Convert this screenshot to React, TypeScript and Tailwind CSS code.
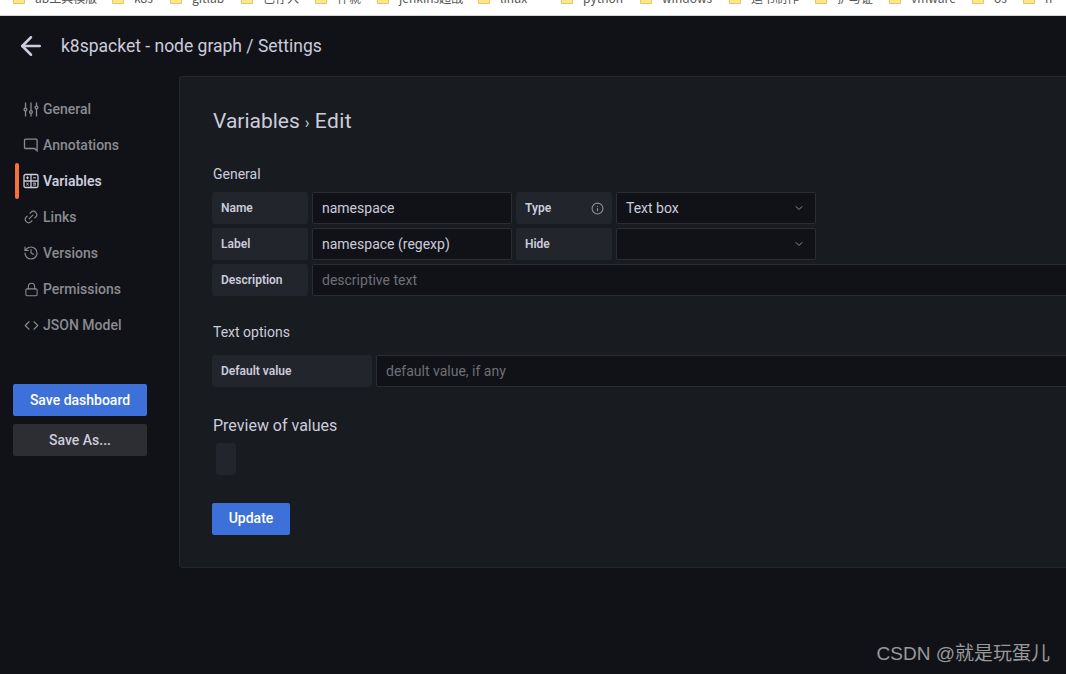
import { ArrowLeft, ChevronDown, Code, History, Info, Link2, Lock } from "lucide-react";
import type { ReactNode } from "react";

const bookmarks = [
  { name: "ab工具模版", w: "w-[99px]" },
  { name: "k8s", w: "w-[58px]" },
  { name: "gitlab", w: "w-[71px]" },
  { name: "已存入", w: "w-[74px]" },
  { name: "伴就", w: "w-[62px]" },
  { name: "jenkins超战", w: "w-[101px]" },
  { name: "linux", w: "w-[83px]" },
  { name: "python", w: "w-[79px]" },
  { name: "windows", w: "w-[89px]" },
  { name: "运书制作", w: "w-[86px]" },
  { name: "护与证", w: "w-[74px]" },
  { name: "vmware", w: "w-[83px]" },
  { name: "os", w: "w-[51px]" },
  { name: "h", w: "w-[43px]" },
];

function Folder() {
  return (
    <svg width="12" height="4" viewBox="0 0 12 4" className="shrink-0">
      <path d="M0.5 0V3.5H11.5V0" fill="#fde68f" stroke="#e8c95a" />
    </svg>
  );
}

function SlidersIcon() {
  return (
    <svg width="16" height="16" viewBox="0 0 16 16" fill="none" stroke="currentColor" strokeWidth="1.3">
      <path d="M2.5 1.5v14M8 1.5v14M13.5 1.5v14" />
      <circle cx="2.5" cy="8.5" r="1.4" fill="#111217" />
      <circle cx="8" cy="11" r="1.4" fill="#111217" />
      <circle cx="13.5" cy="6.5" r="1.4" fill="#111217" />
    </svg>
  );
}

function CommentIcon() {
  return (
    <svg width="16" height="16" viewBox="0 0 16 16" fill="none" stroke="currentColor" strokeWidth="1.3">
      <path d="M2.5 2.2h10.6a1 1 0 0 1 1 1v10.6l-2.6-2.3H2.5a1 1 0 0 1-1-1V3.2a1 1 0 0 1 1-1z" />
    </svg>
  );
}

function VariablesIcon() {
  return (
    <svg width="16" height="16" viewBox="0 0 16 16" fill="none" stroke="currentColor" strokeWidth="1.3">
      <rect x="1" y="1.5" width="14" height="13" rx="1.5" />
      <path d="M8 1.5v13M1 8h14" />
      <path d="M3 4.8h3M4.5 3.3v3M10 4.8h3M3.4 10l2.2 2.2M5.6 10l-2.2 2.2M10 10.2h3M10 12h3" strokeWidth="1" />
    </svg>
  );
}

const nav: { label: string; icon: ReactNode; active?: boolean }[] = [
  { label: "General", icon: <SlidersIcon /> },
  { label: "Annotations", icon: <CommentIcon /> },
  { label: "Variables", icon: <VariablesIcon />, active: true },
  { label: "Links", icon: <Link2 size={16} strokeWidth={1.7} className="-rotate-45" /> },
  { label: "Versions", icon: <History size={16} strokeWidth={1.7} /> },
  { label: "Permissions", icon: <Lock size={15} strokeWidth={1.7} /> },
  { label: "JSON Model", icon: <Code size={15} strokeWidth={1.7} /> },
];

function FieldLabel({ children, className = "w-[96px]" }: { children: ReactNode; className?: string }) {
  return (
    <div className={`flex h-8 shrink-0 items-center justify-between rounded-[3px] bg-[#22252b] pl-[9px] pr-2 text-xs font-semibold text-[#ccccdc] ${className}`}>
      {children}
    </div>
  );
}

function TextField({ value, placeholder, className = "w-[200px]" }: { value?: string; placeholder?: string; className?: string }) {
  return (
    <div className={`flex h-8 shrink-0 items-center rounded-[2px] border border-[#2b2d33] bg-[#111217] px-[9px] text-sm ${value ? "text-[#ccccdc]" : "text-[#6e6f76]"} ${className}`}>
      {value ?? placeholder}
    </div>
  );
}

function SelectField({ value }: { value?: string }) {
  return (
    <div className="flex h-8 w-[200px] shrink-0 items-center justify-between rounded-[2px] border border-[#2b2d33] bg-[#111217] pl-[9px] pr-[10px] text-sm text-[#ccccdc]">
      <span>{value}</span>
      <ChevronDown size={12} className="text-[#8e8e93]" />
    </div>
  );
}

export default function App() {
  return (
    <div className="relative flex h-[674px] w-[1066px] flex-col overflow-hidden bg-[#111217] font-['Roboto',sans-serif]">
      {/* browser bookmarks bar, cut off by the top of the shot */}
      <div className="flex h-[16px] shrink-0 items-start overflow-hidden border-b border-[#d4d4d6] bg-white pl-[13px]">
        {bookmarks.map((b) => (
          <div key={b.name} className={`flex h-[15px] shrink-0 items-end gap-[10px] overflow-hidden ${b.w}`}>
            <div className="self-start">
              <Folder />
            </div>
            <span className="mb-[11px] whitespace-nowrap font-['Noto_Sans_CJK_SC',sans-serif] text-xs leading-none text-[#555]">
              {b.name}
            </span>
          </div>
        ))}
      </div>

      <header className="flex h-[60px] shrink-0 items-center pl-[16px] text-[#ccccdc]">
        <ArrowLeft size={30} strokeWidth={2} />
        <h1 className="ml-[15px] pt-px text-[17.5px] leading-none">k8spacket - node graph / Settings</h1>
      </header>

      <div className="flex min-h-0 flex-1 items-start">
        <aside className="flex w-[179px] shrink-0 flex-col pt-[15px]">
          <nav className="flex flex-col">
            {nav.map((n) => (
              <div
                key={n.label}
                className={`relative flex h-9 items-center gap-[4px] pl-[23px] text-sm font-medium ${n.active ? "text-[#ccccdc]" : "text-[#8a8b91]"}`}
              >
                {n.active && <span className="absolute left-[15px] top-0 h-9 w-1 rounded-sm bg-[#f5703a]" />}
                <span className="flex w-4 justify-center">{n.icon}</span>
                <span className={n.active ? "font-semibold" : ""}>{n.label}</span>
              </div>
            ))}
          </nav>
          <div className="ml-[13px] mt-[41px] flex w-[134px] flex-col gap-2 self-start">
            <button className="h-8 rounded-[2px] bg-[#3d71d9] pb-px text-sm font-medium text-white">Save dashboard</button>
            <button className="h-8 rounded-[2px] bg-[#2d2e34] pb-px text-sm font-medium text-[#ccccdc]">Save As...</button>
          </div>
        </aside>

        <main className="h-[492px] w-[1000px] shrink-0 rounded-[3px] border border-[#25272c] bg-[#181b1f] pl-[32px] pt-[29px]">
          <h2 className="ml-px flex items-baseline text-[21px] leading-[30px] text-[#ccccdc]">
            Variables<span className="mx-[5px] text-base">›</span><span className="tracking-[0.5px]">Edit</span>
          </h2>

          <h3 className="ml-px mt-[29px] text-sm font-normal leading-[18px] text-[#ccccdc]">General</h3>
          <div className="mt-[9px] flex flex-col gap-1">
            <div className="flex gap-1">
              <FieldLabel>Name</FieldLabel>
              <TextField value="namespace" />
              <FieldLabel>
                Type
                <Info size={13} className="text-[#8e8e93]" />
              </FieldLabel>
              <SelectField value="Text box" />
            </div>
            <div className="flex gap-1">
              <FieldLabel>Label</FieldLabel>
              <TextField value="namespace (regexp)" />
              <FieldLabel>Hide</FieldLabel>
              <SelectField />
            </div>
            <div className="flex gap-1">
              <FieldLabel>Description</FieldLabel>
              <TextField placeholder="descriptive text" className="w-[800px]" />
            </div>
          </div>

          <h3 className="ml-px mt-[27px] text-sm font-normal leading-[18px] text-[#ccccdc]">Text options</h3>
          <div className="mt-[14px] flex gap-1">
            <FieldLabel className="w-[160px]">Default value</FieldLabel>
            <TextField placeholder="default value, if any" className="w-[800px]" />
          </div>

          <h3 className="ml-px mt-7 text-base font-normal leading-[22px] text-[#ccccdc]">Preview of values</h3>
          <div className="ml-1 mt-[6px] h-8 w-5 rounded-[3px] bg-[#22252b]" />

          <button className="mt-7 h-8 w-[78px] rounded-[2px] bg-[#3d71d9] pb-[2px] text-sm font-medium text-white">Update</button>
        </main>
      </div>

      <div className="absolute bottom-[8px] right-[16px] font-['Liberation_Sans','Noto_Sans_CJK_SC',sans-serif] text-[19px] leading-6 text-[#9a9a9c]">
        CSDN @就是玩蛋儿
      </div>
    </div>
  );
}
